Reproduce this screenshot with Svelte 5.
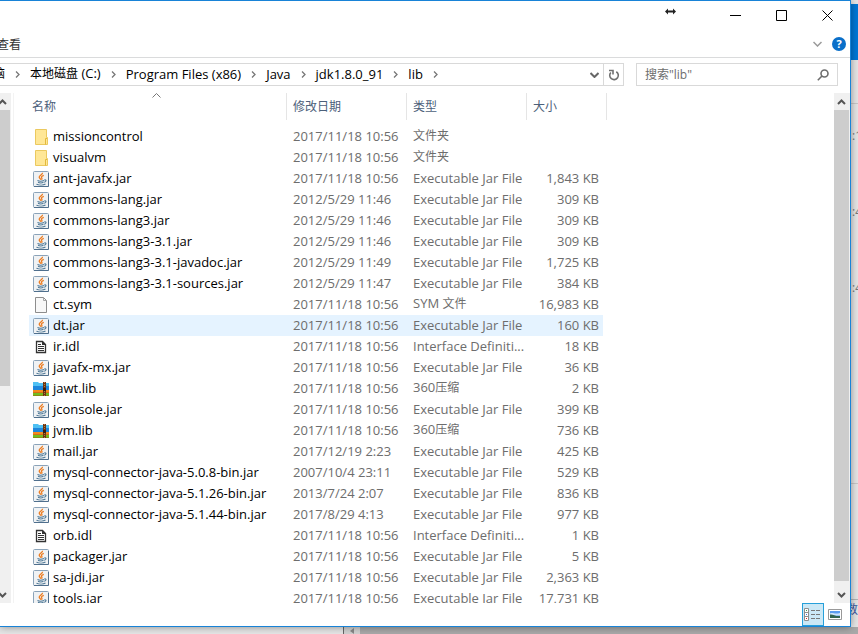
<script lang="ts">
	interface FileEntry {
		name: string;
		date: string;
		type: string;
		size?: string;
		icon: 'folder' | 'jar' | 'file' | 'text' | 'archive';
	}

	const JAR = 'Executable Jar File';
	const IDL = 'Interface Definiti...';

	const jar = (name: string, date: string, size: string): FileEntry => ({
		name,
		date,
		type: JAR,
		size,
		icon: 'jar'
	});

	const files: FileEntry[] = [
		{ name: 'missioncontrol', date: '2017/11/18 10:56', type: '文件夹', icon: 'folder' },
		{ name: 'visualvm', date: '2017/11/18 10:56', type: '文件夹', icon: 'folder' },
		jar('ant-javafx.jar', '2017/11/18 10:56', '1,843 KB'),
		jar('commons-lang.jar', '2012/5/29 11:46', '309 KB'),
		jar('commons-lang3.jar', '2012/5/29 11:46', '309 KB'),
		jar('commons-lang3-3.1.jar', '2012/5/29 11:46', '309 KB'),
		jar('commons-lang3-3.1-javadoc.jar', '2012/5/29 11:49', '1,725 KB'),
		jar('commons-lang3-3.1-sources.jar', '2012/5/29 11:47', '384 KB'),
		{ name: 'ct.sym', date: '2017/11/18 10:56', type: 'SYM 文件', size: '16,983 KB', icon: 'file' },
		jar('dt.jar', '2017/11/18 10:56', '160 KB'),
		{ name: 'ir.idl', date: '2017/11/18 10:56', type: IDL, size: '18 KB', icon: 'text' },
		jar('javafx-mx.jar', '2017/11/18 10:56', '36 KB'),
		{ name: 'jawt.lib', date: '2017/11/18 10:56', type: '360压缩', size: '2 KB', icon: 'archive' },
		jar('jconsole.jar', '2017/11/18 10:56', '399 KB'),
		{ name: 'jvm.lib', date: '2017/11/18 10:56', type: '360压缩', size: '736 KB', icon: 'archive' },
		jar('mail.jar', '2017/12/19 2:23', '425 KB'),
		jar('mysql-connector-java-5.0.8-bin.jar', '2007/10/4 23:11', '529 KB'),
		jar('mysql-connector-java-5.1.26-bin.jar', '2013/7/24 2:07', '836 KB'),
		jar('mysql-connector-java-5.1.44-bin.jar', '2017/8/29 4:13', '977 KB'),
		{ name: 'orb.idl', date: '2017/11/18 10:56', type: IDL, size: '1 KB', icon: 'text' },
		jar('packager.jar', '2017/11/18 10:56', '5 KB'),
		jar('sa-jdi.jar', '2017/11/18 10:56', '2,363 KB'),
		jar('tools.jar', '2017/11/18 10:56', '17,731 KB')
	];

	const crumbs = ['此电脑', '本地磁盘 (C:)', 'Program Files (x86)', 'Java', 'jdk1.8.0_91', 'lib'];

	let selected = $state('dt.jar');
	let query = $state('');

	// Chinese runs are set one size smaller than the Latin text around them
	function runs(text: string) {
		return text.split(/([\u4e00-\u9fff]+)/).filter(Boolean).map((part) => ({
			part,
			han: /[\u4e00-\u9fff]/.test(part)
		}));
	}
</script>

{#snippet label(text: string)}
	{#each runs(text) as run}<span class:han={run.han}>{run.part}</span>{/each}
{/snippet}

{#snippet fileIcon(kind: string)}
	<svg class="file-icon" viewBox="0 0 16 16" aria-hidden="true">
		{#if kind === 'folder'}
			<path d="M2.5.5h11v8h1v7h-12z" fill="#ffe796" stroke="#ebc95f" />
			<path d="M12.5 15.500v-6h1.500" fill="none" stroke="#e3b93c" />
		{:else if kind === 'jar'}
			<rect x=".5" y=".5" width="15" height="15" rx="1" fill="#f0f2f4" stroke="#8ba3b9" />
			<path d="M1 15.500h14.500V2" fill="none" stroke="#4f6f8d" />
			<path d="M9.500 1.800C10 3.500 6 4.500 6.200 6.200c.1 1 1.300 1.500 1.600 2.500M10.800 4.300C8.500 5 8 6 8.800 7c.4.6.2 1-.2 1.600" fill="none" stroke="#ec7d22" stroke-width="1.300" />
			<path d="M4.500 9.500c1.500.8 4.500.8 6.500 0M5 11.300c1.500.7 4 .7 5.500 0M3.500 13.300c2.500.9 7 .9 9-.2M11.300 9c2.400-.6 2.200 1.800-.2 2.300" fill="none" stroke="#4e7896" stroke-width="1.100" />
		{:else if kind === 'file'}
			<path d="M2.500.5h8l3 3v12h-11z" fill="#f8f8f8" stroke="#8d8d8d" />
			<path d="M10.500.5v3h3" fill="none" stroke="#a5a5a5" />
		{:else if kind === 'text'}
			<path d="M3.500 2.500h6l3 3v8h-9z" fill="#fff" stroke="#333" stroke-width="1.300" />
			<path d="M9 2l4 4H9z" fill="#333" />
			<path d="M5 5.500h3M5 7.500h6M5 9.500h6M5 11.500h6" stroke="#333" />
		{:else}
			<path d="M0 1h5l1 1h10v7H0z" fill="#4fc0f3" />
			<path d="M0 5h16v4H0z" fill="#1f86dc" />
			<path d="M0 9h16v3H0z" fill="#f58a1e" />
			<path d="M0 12h16v3H0z" fill="#72bd20" />
			<path d="M0 11.500h16M0 14.500h16" stroke="#a64c08" stroke-opacity=".4" />
			<path d="M10 1h3v14h-3z" fill="#6b3413" />
			<path d="M10 7h3v3h-3z" fill="#3c1c0c" />
			<path d="M11.500 1v6M11.500 10v5" stroke="#b5793c" stroke-dasharray="1 1" />
		{/if}
	</svg>
{/snippet}

{#snippet scrollArrow(down: boolean)}
	<svg class="scroll-arrow" viewBox="0 0 9 6" aria-hidden="true">
		<path d={down ? 'M1 1l3.500 3.500L8 1' : 'M1 5l3.500-3.500L8 5'} />
	</svg>
{/snippet}

<div class="desktop">
	<main class="window">
		<header class="titlebar">
			<svg class="resize-cursor" viewBox="0 0 11 7" aria-hidden="true">
				<path d="M0 3.500L3 .5v2h5v-2l3 3-3 3v-2H3v2z" />
			</svg>
			<button aria-label="最小化">
				<svg viewBox="0 0 11 11"><path d="M0 5.500h11" /></svg>
			</button>
			<button aria-label="最大化">
				<svg viewBox="0 0 11 11"><path d="M.5.5h10v10H.5z" /></svg>
			</button>
			<button aria-label="关闭">
				<svg viewBox="0 0 11 11"><path d="M.5.5l10 10M10.500.5l-10 10" /></svg>
			</button>
		</header>

		<div class="ribbon">
			<button class="tab">查看</button>
			<button class="expand" aria-label="展开功能区">
				<svg viewBox="0 0 9 6"><path d="M.5 1l4 4 4-4" /></svg>
			</button>
			<button class="help" aria-label="帮助">?</button>
		</div>

		<div class="toolbar">
			<div class="address">
				<nav class="crumbs">
					{#each crumbs as crumb}
						<a href="#top">{@render label(crumb)}</a>
						<svg class="crumb-arrow" viewBox="0 0 5 7" aria-hidden="true"><path d="M1 .5l3 3-3 3" /></svg>
					{/each}
				</nav>
				<button class="history" aria-label="以前的位置">
					<svg viewBox="0 0 9 6"><path d="M.5 1l4 4 4-4" /></svg>
				</button>
				<button class="refresh" aria-label="刷新">
					<svg viewBox="0 0 12 12"><path d="M8.300 2.700A4.300 4.300 0 1 1 2.800 3.500" /><path d="M1 1.500h4v4" /></svg>
				</button>
			</div>
			<label class="search">
				<input type="text" placeholder={'搜索"lib"'} aria-label="搜索" bind:value={query} />
				<svg viewBox="0 0 12 12" aria-hidden="true"><circle cx="7.500" cy="4.500" r="3.500" /><path d="M5 7L.8 11.200" /></svg>
			</label>
		</div>

		<div class="content">
			<div class="scrollbar tree-scroll">
				{@render scrollArrow(false)}
				<div class="track"><div class="thumb"></div></div>
				{@render scrollArrow(true)}
			</div>

			<div class="list">
				<table>
					<thead>
						<tr>
							<th class="name">
								名称
								<svg class="sort" viewBox="0 0 9 5" aria-hidden="true"><path d="M.5 4.500l4-4 4 4" /></svg>
							</th>
							<th class="date">修改日期</th>
							<th class="type">类型</th>
							<th class="size">大小</th>
						</tr>
					</thead>
					<tbody>
						{#each files as file}
							<tr class:selected={file.name === selected} onclick={() => (selected = file.name)}>
								<td class="name">
									<div class="entry">{@render fileIcon(file.icon)}<span>{file.name}</span></div>
								</td>
								<td>{file.date}</td>
								<td>{@render label(file.type)}</td>
								<td class="size">{file.size ?? ''}</td>
							</tr>
						{/each}
					</tbody>
				</table>
			</div>

			<div class="scrollbar">
				{@render scrollArrow(false)}
				<div class="track"><div class="thumb"></div></div>
				{@render scrollArrow(true)}
			</div>
		</div>

		<footer class="status">
			<button class="view active" aria-label="详细信息">
				<svg width="18" height="15" viewBox="0 0 18 15">
					<path d="M.5 1.500h4v12h-4zM.5 5.500h4M.5 9.500h4" fill="#fff" stroke="#8e8e8e" />
					<path d="M2 3h1v1H2z" fill="#3b9b55" />
					<path d="M2 7h1v1H2z" fill="#3878e0" />
					<path d="M2 11h1v1H2z" fill="#e02020" />
					<path d="M7 3.500h4M12 3.500h4M7 7.500h4M12 7.500h4M7 11.500h4M12 11.500h4" stroke="#777" />
				</svg>
			</button>
			<button class="view" aria-label="大缩略图">
				<svg width="14" height="11" viewBox="0 0 14 11">
					<path d="M.5.5h13v10H.5z" fill="#fff" stroke="#999" />
					<path d="M2 2h10v7H2z" fill="#5c9df0" />
					<path d="M2 4.500c3-1.500 4 1 10-.5v2.500H2z" fill="#cfe6fb" />
					<path d="M2 5.500c3-.5 5 2 10 1.500v2H2z" fill="#33644f" />
				</svg>
			</button>
		</footer>
	</main>

	<aside class="behind-right" aria-hidden="true">
		<div class="accent"></div>
		<div class="pane-head"></div>
		<div class="times">
			<span>:1</span>
			<span>:4</span>
			<span>:4</span>
		</div>
		<div class="pane-foot"></div>
		<div class="footer-label">数</div>
	</aside>

	<div class="behind-bottom" aria-hidden="true">
		<div class="sheet"></div>
		<div class="sheet-scroll">
			<svg viewBox="0 0 4 6"><path d="M4 0v6L0 3z" /></svg>
		</div>
	</div>
</div>

<style>
:global(body) {
	background: #a9a9a9;
}

.desktop {
	display: grid;
	grid-template-columns: minmax(0, 1fr) 7px;
	grid-template-rows: minmax(0, 1fr) 7px;
	height: 100vh;
	overflow: hidden;
	font-family: 'Open Sans', 'Noto Sans CJK SC', sans-serif;
	font-size: 13px;
	color: #000;
}

.han {
	font-size: 12px;
}

button {
	padding: 0;
	border: 0;
	background: none;
	font: inherit;
	color: inherit;
}

svg {
	display: block;
	flex-shrink: 0;
}

/* Window frame */
.window {
	position: relative;
	z-index: 1;
	display: flex;
	flex-direction: column;
	min-width: 0;
	border: 1px solid #1883d7;
	border-left: 0;
	background: #fff;
	box-shadow: 0 0 8px rgba(0, 0, 0, 0.4);
}

.titlebar {
	position: relative;
	display: flex;
	justify-content: flex-end;
	height: 29px;
	flex-shrink: 0;
}

.titlebar button {
	display: grid;
	place-items: center;
	width: 46px;
}

.titlebar button svg {
	width: 11px;
	height: 11px;
	fill: none;
	stroke: #000;
}

.resize-cursor {
	position: absolute;
	top: 7px;
	right: 174px;
	width: 11px;
	height: 7px;
	fill: #222;
}

.ribbon {
	display: flex;
	align-items: center;
	height: 27px;
	flex-shrink: 0;
	padding-right: 4px;
	border-bottom: 1px solid #dadbdc;
}

.tab {
	margin-left: -3px;
	margin-right: auto;
	font-size: 12px;
	color: #333;
}

.expand svg,
.history svg {
	width: 9px;
	height: 6px;
	fill: none;
	stroke: #9a9a9a;
	stroke-width: 1.5;
}

.help {
	width: 14px;
	height: 14px;
	margin-left: 10px;
	border-radius: 50%;
	background: #0a6fc9;
	color: #fff;
	font-size: 11px;
	font-weight: 700;
	line-height: 14px;
}

/* Address bar and search */
.toolbar {
	display: flex;
	gap: 12px;
	flex-shrink: 0;
	padding: 5px 12px 7px 0;
}

.address {
	display: flex;
	flex: 1;
	min-width: 0;
	height: 21px;
	border: 1px solid #d9d9d9;
	border-left: 0;
}

.crumbs {
	display: flex;
	align-items: center;
	gap: 10px;
	flex: 1;
	min-width: 0;
	margin-left: -31px;
	line-height: 18px;
	white-space: nowrap;
}

.crumbs a {
	padding-bottom: 2px;
	color: #000;
	text-decoration: none;
}

.crumb-arrow {
	width: 5px;
	height: 7px;
	fill: none;
	stroke: #777;
	stroke-width: 1.3;
}

.history {
	display: grid;
	place-items: center;
	width: 18px;
}

.history svg {
	stroke: #666;
	stroke-width: 2;
}

.refresh {
	display: grid;
	place-items: center;
	width: 20px;
	border-left: 1px solid #d9d9d9;
}

.refresh svg {
	width: 12px;
	height: 12px;
	fill: none;
	stroke: #707070;
	stroke-width: 1.6;
}

.search {
	display: flex;
	align-items: center;
	flex: 0 1 200px;
	min-width: 0;
	height: 21px;
	border: 1px solid #d9d9d9;
}

.search input {
	flex: 1;
	width: 0;
	min-width: 0;
	padding: 0 8px;
	border: 0;
	outline: 0;
	background: none;
	font: inherit;
	font-size: 12px;
}

.search input::placeholder {
	color: #6d6d6d;
}

.search svg {
	width: 12px;
	height: 12px;
	margin-right: 8px;
	fill: none;
	stroke: #6d6d6d;
	stroke-width: 1.6;
}

/* File list */
.content {
	display: flex;
	flex: 1;
	min-height: 0;
}

.list {
	flex: 1;
	min-width: 0;
	margin-left: 2px;
	padding-left: 15px;
	border-left: 1px solid #f3f3f3;
	overflow: hidden;
}

table {
	table-layout: fixed;
	width: 578px;
	border-collapse: separate;
	border-spacing: 0;
}

th {
	position: relative;
	width: 120px;
	height: 27px;
	box-sizing: border-box;
	padding: 0 0 0 6px;
	border-right: 1px solid #e5e5e5;
	font-size: 12px;
	font-weight: 400;
	line-height: 18px;
	text-align: left;
	color: #4c607a;
}

th.name {
	width: 258px;
	padding-left: 3px;
}

th.size {
	width: 80px;
}

.sort {
	position: absolute;
	top: 0;
	left: 123px;
	width: 9px;
	height: 5px;
	fill: none;
	stroke: #777;
}

tbody::before {
	content: '';
	display: block;
	height: 6px;
}

td {
	height: 21px;
	box-sizing: border-box;
	padding: 0 0 2px 6px;
	line-height: 18px;
	white-space: nowrap;
	color: #6d6d6d;
}

td.name {
	padding: 0 0 0 4px;
	color: #000;
}

td.size {
	padding-right: 4px;
	border-right: 4px solid transparent;
	background-clip: padding-box;
	text-align: right;
}

.selected td {
	background-color: #e5f3ff;
}

.entry {
	display: flex;
	align-items: center;
	gap: 4px;
}

.entry span {
	padding-bottom: 2px;
}

.file-icon {
	width: 16px;
	height: 16px;
}

/* Scrollbars */
.scrollbar {
	display: flex;
	flex-direction: column;
	align-items: center;
	box-sizing: border-box;
	width: 16px;
	padding-right: 1px;
	background: #f0f0f0;
}

/* The tree's scrollbar is half out of view on the left */
.tree-scroll {
	margin-left: -5px;
}

.scroll-arrow {
	width: 9px;
	height: 6px;
	padding: 6px 0 5px;
	fill: none;
	stroke: #555;
	stroke-width: 2;
}

.track {
	flex: 1;
	align-self: stretch;
}

.thumb {
	height: 99%;
	background: #cdcdcd;
}

.tree-scroll .thumb {
	height: 58%;
}

/* Status bar */
.status {
	display: flex;
	justify-content: flex-end;
	flex-shrink: 0;
	height: 23px;
	padding-right: 4px;
}

.view {
	display: grid;
	place-items: center;
	width: 22px;
}

.view.active {
	border: 1px solid #26a0da;
	background: #cbe8f6;
}

/* Whatever shows past the window's edges */
.behind-right {
	display: flex;
	flex-direction: column;
	overflow: hidden;
	padding-top: 4px;
	background: #e6e6e6;
}

.accent {
	height: 56px;
	background: #0078d7;
}

.pane-head {
	height: 43px;
	border-bottom: 1px solid #c8c8c8;
}

.times {
	display: grid;
	gap: 12px;
	padding: 0 0 163px 1px;
	border-bottom: 1px solid #c8c8c8;
	line-height: 64px;
	font-size: 12px;
	color: #777;
}

.pane-foot {
	flex: 1;
	border-bottom: 1px solid #b5b5b5;
}

.footer-label {
	height: 27px;
	margin-left: -5px;
	font-size: 12px;
	line-height: 20px;
	color: #3a559f;
}

.behind-bottom {
	grid-column: 1 / -1;
	display: flex;
	background: #a9a9a9;
}

.sheet {
	width: 40%;
	border-right: 1px solid #666;
	background: #e6e6e6;
}

.sheet-scroll {
	display: grid;
	place-items: center;
	width: 16px;
	background: #d2d2d2;
}

.sheet-scroll svg {
	width: 4px;
	height: 6px;
	fill: #888;
}
</style>
